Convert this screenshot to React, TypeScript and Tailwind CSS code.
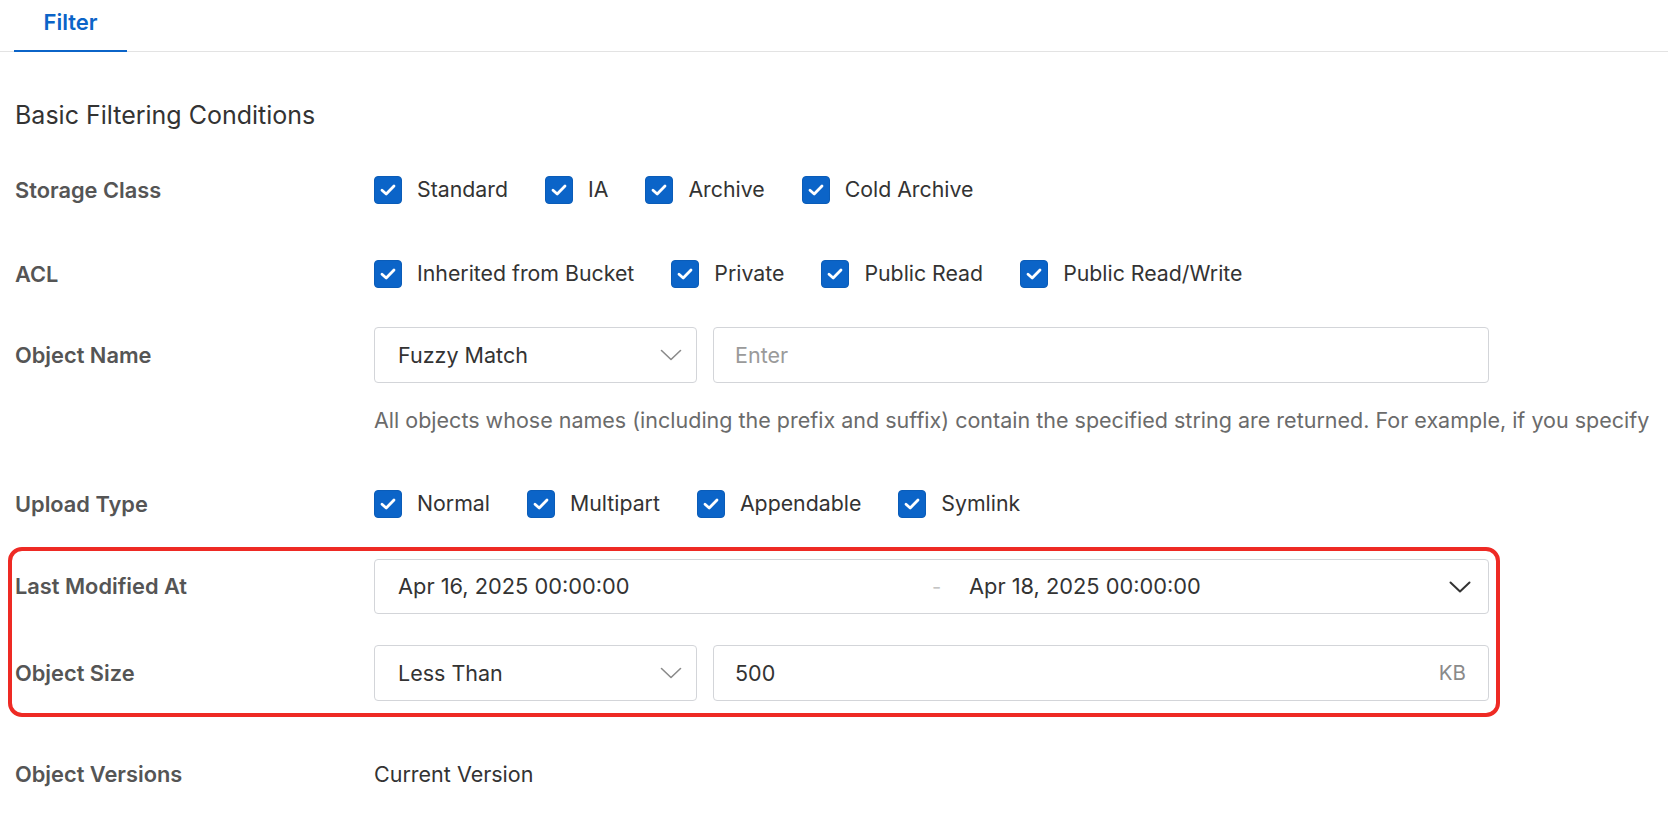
import React from "react";

const FONT = { fontFamily: "Inter, 'Noto Sans', 'Liberation Sans', sans-serif" };

function Check({ label }: { label: string }) {
  return (
    <div className="flex items-center mr-[37px]">
      <span className="w-[28px] h-[28px] rounded-[4px] bg-[#0b64c8] border border-[#0a5cb8] flex items-center justify-center">
        <svg width="16" height="12" viewBox="0 0 16 12" fill="none">
          <path d="M2 6.2 L6.2 10 L14 2" stroke="white" strokeWidth="2.8" strokeLinecap="round" strokeLinejoin="round" />
        </svg>
      </span>
      <span className="ml-[15px] text-[21.3px] text-[#333]">{label}</span>
    </div>
  );
}

function Chevron({ dark }: { dark?: boolean }) {
  return (
    <svg width="22" height="12" viewBox="0 0 22 12" fill="none">
      <path
        d="M1.5 1.5 L11 10.5 L20.5 1.5"
        stroke={dark ? "#333" : "#8a8a8a"}
        strokeWidth={dark ? 2 : 1.6}
        strokeLinecap="round"
        strokeLinejoin="round"
      />
    </svg>
  );
}

function Label({ children }: { children: React.ReactNode }) {
  return <div className="w-[359px] shrink-0 text-[21.8px] font-semibold text-[#555]">{children}</div>;
}

function Select({ value }: { value: string }) {
  return (
    <div className="w-[323px] h-full border border-[#d3d5d9] rounded-[4px] flex items-center justify-between pl-[23px] pr-[14px]">
      <span className="text-[21.5px] text-[#333]">{value}</span>
      <Chevron />
    </div>
  );
}

export default function App() {
  return (
    <div className="w-[1668px] h-[818px] bg-white overflow-hidden" style={FONT}>
      {/* Tabs */}
      <div className="h-[52px] pl-[14px] border-b border-[#e3e3e3] flex">
        <div className="w-[113px] h-[52px] border-b-2 border-[#0b64c8] flex justify-center pt-[8px]">
          <span className="text-[22px] font-semibold text-[#0b64c8] leading-[28px]">Filter</span>
        </div>
      </div>

      <div className="pl-[15px]">
        <h2 className="mt-[48px] text-[25px] leading-[30px] text-[#333]">Basic Filtering Conditions</h2>

        {/* Storage Class */}
        <div className="mt-[40px] h-[40px] flex items-center">
          <Label>Storage Class</Label>
          <div className="flex items-center">
            {["Standard", "IA", "Archive", "Cold Archive"].map((s) => (
              <Check key={s} label={s} />
            ))}
          </div>
        </div>

        {/* ACL */}
        <div className="mt-[44px] h-[40px] flex items-center">
          <Label>ACL</Label>
          <div className="flex items-center">
            {["Inherited from Bucket", "Private", "Public Read", "Public Read/Write"].map((s) => (
              <Check key={s} label={s} />
            ))}
          </div>
        </div>

        {/* Object Name */}
        <div className="mt-[33px] h-[56px] flex items-center">
          <Label>Object Name</Label>
          <div className="flex h-full gap-[16px]">
            <Select value="Fuzzy Match" />
            <div className="w-[776px] h-full border border-[#d3d5d9] rounded-[4px] flex items-center pl-[21px]">
              <span className="text-[21.5px] text-[#9a9a9a]">Enter</span>
            </div>
          </div>
        </div>
        <p className="mt-[23px] ml-[359px] text-[21.5px] leading-[28px] text-[#6b6b6b] whitespace-nowrap">
          All objects whose names (including the prefix and suffix) contain the specified string are returned. For example, if you specify
        </p>

        {/* Upload Type */}
        <div className="mt-[50px] h-[40px] flex items-center">
          <Label>Upload Type</Label>
          <div className="flex items-center">
            {["Normal", "Multipart", "Appendable", "Symlink"].map((s) => (
              <Check key={s} label={s} />
            ))}
          </div>
        </div>

        {/* Highlighted rows */}
        <div className="mt-[23px] ml-[-7px] w-[1492px] border-[4px] border-[#ee2a24] rounded-[14px] pl-[3px] pt-[8px] pb-[12px]">
          <div className="h-[55px] flex items-center">
            <Label>Last Modified At</Label>
            <div className="w-[1115px] h-full border border-[#d3d5d9] rounded-[4px] flex items-center pl-[23px] pr-[17px]">
              <span className="w-[534px] text-[21.8px] text-[#333]">Apr 16, 2025 00:00:00</span>
              <span className="w-[37px] text-[20px] text-[#c4c4c4]">-</span>
              <span className="flex-1 text-[21.8px] text-[#333]">Apr 18, 2025 00:00:00</span>
              <Chevron dark />
            </div>
          </div>
          <div className="mt-[31px] h-[56px] flex items-center">
            <Label>Object Size</Label>
            <div className="flex h-full gap-[16px]">
              <Select value="Less Than" />
              <div className="w-[776px] h-full border border-[#d3d5d9] rounded-[4px] flex items-center justify-between pl-[21px] pr-[22px]">
                <span className="text-[21.5px] text-[#333]">500</span>
                <span className="text-[20.5px] text-[#8a8a8a]">KB</span>
              </div>
            </div>
          </div>
        </div>

        {/* Object Versions */}
        <div className="mt-[37px] h-[40px] flex items-center">
          <Label>Object Versions</Label>
          <span className="text-[21.5px] text-[#333]">Current Version</span>
        </div>
      </div>
    </div>
  );
}
